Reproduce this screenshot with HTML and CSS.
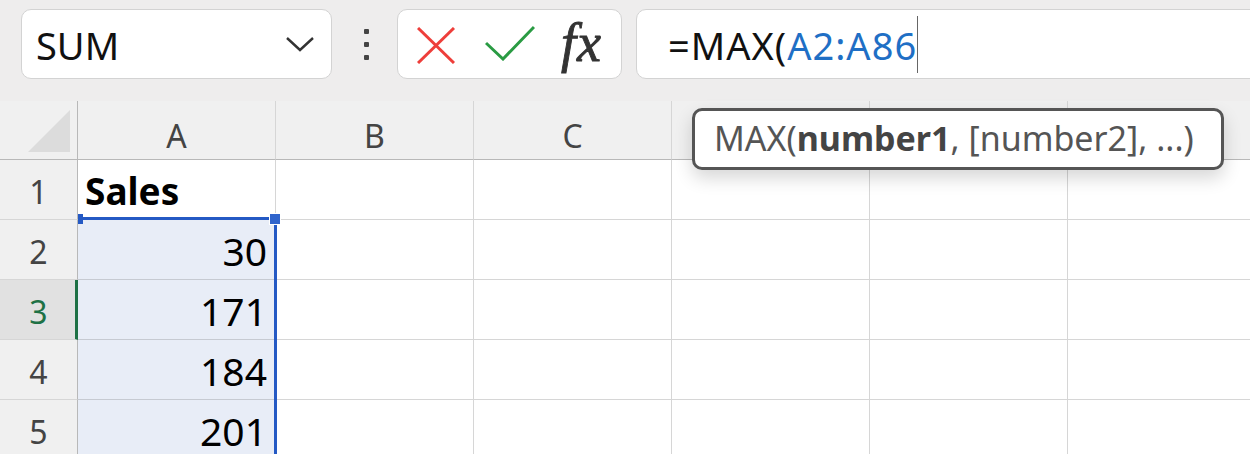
FILE: index.html
```html
<!DOCTYPE html>
<html lang="en">
<head>
<meta charset="utf-8">
<title>Excel MAX formula</title>
<link rel="stylesheet" href="styles.css">
</head>
<body>
<div class="app">
  <div class="toolbar">
    <div class="namebox">
      <span class="name-text">SUM</span>
      <svg class="chevron" width="30" height="16" viewBox="0 0 30 16"><polyline points="2,2 15,14 28,2" fill="none" stroke="#333" stroke-width="2.4"/></svg>
    </div>
    <div class="dots"><span></span><span></span><span></span></div>
    <div class="buttons">
      <svg class="icon-x" width="38" height="37" viewBox="0 0 38 37"><line x1="1" y1="1" x2="37" y2="36" stroke="#ee3e3a" stroke-width="3"/><line x1="37" y1="1" x2="1" y2="36" stroke="#ee3e3a" stroke-width="3"/></svg>
      <svg class="icon-check" width="50" height="36" viewBox="0 0 50 36"><polyline points="1,18 18,34 49,2" fill="none" stroke="#2a9b43" stroke-width="3"/></svg>
      <span class="fx">fx</span>
    </div>
    <div class="formula">
      <span class="f-dark">=MAX(</span><span class="f-blue">A2:A86</span><span class="caret"></span>
    </div>
  </div>
  <div class="sheet">
    <div class="corner"><span class="tri"></span></div>
    <div class="colhead">A</div>
    <div class="colhead">B</div>
    <div class="colhead">C</div>
    <div class="colhead">D</div>
    <div class="colhead">E</div>
    <div class="colhead last"></div>

    <div class="rowhead">1</div>
    <div class="cell bold">Sales</div>
    <div class="cell"></div><div class="cell"></div><div class="cell"></div><div class="cell"></div><div class="cell last"></div>

    <div class="rowhead">2</div>
    <div class="cell num sel">30</div>
    <div class="cell"></div><div class="cell"></div><div class="cell"></div><div class="cell"></div><div class="cell last"></div>

    <div class="rowhead active">3</div>
    <div class="cell num sel">171</div>
    <div class="cell"></div><div class="cell"></div><div class="cell"></div><div class="cell"></div><div class="cell last"></div>

    <div class="rowhead">4</div>
    <div class="cell num sel">184</div>
    <div class="cell"></div><div class="cell"></div><div class="cell"></div><div class="cell"></div><div class="cell last"></div>

    <div class="rowhead">5</div>
    <div class="cell num sel">201</div>
    <div class="cell"></div><div class="cell"></div><div class="cell"></div><div class="cell"></div><div class="cell last"></div>

    <div class="range"></div>
    <div class="handle-left"></div>
    <div class="handle-right"></div>

    <div class="tooltip">MAX(<b>number1</b>, [number2], ...)</div>
  </div>
</div>
</body>
</html>
```

FILE: styles.css
```css
html, body {
  margin: 0;
  padding: 0;
}
body {
  width: 1250px;
  height: 454px;
  overflow: hidden;
  background: #eeeded;
  font-family: "Noto Sans", "Open Sans", sans-serif;
}
.app {
  width: 1250px;
  height: 454px;
  overflow: hidden;
}
.toolbar {
  height: 101px;
  box-sizing: border-box;
  padding-top: 9px;
  display: flex;
  align-items: flex-start;
  background: #eeeded;
}
.toolbar > * {
  flex-shrink: 0;
}
.namebox {
  margin-left: 21px;
  width: 311px;
  height: 70px;
  box-sizing: border-box;
  background: #fff;
  border: 1px solid #d3d3d3;
  border-radius: 10px;
  display: flex;
  align-items: center;
  padding-left: 14px;
  padding-right: 16px;
}
.name-text {
  flex: 1;
  font-size: 38px;
  color: #111;
  line-height: 68px;
  padding-top: 2px;
}
.chevron {
  display: block;
}
.dots {
  margin-left: 32px;
  margin-top: 20px;
  display: flex;
  flex-direction: column;
  gap: 8px;
}
.dots span {
  width: 5px;
  height: 5px;
  background: #444;
  border-radius: 1px;
}
.buttons {
  margin-left: 28px;
  width: 225px;
  height: 70px;
  box-sizing: border-box;
  background: #fff;
  border: 1px solid #d3d3d3;
  border-radius: 10px;
  display: flex;
  align-items: center;
  padding-left: 19px;
}
.icon-x {
  display: block;
  margin-top: 2px;
}
.icon-check {
  display: block;
  margin-left: 30px;
  margin-top: -2px;
}
.fx {
  margin-left: 26px;
  font-family: "Liberation Serif", "DejaVu Serif", serif;
  font-style: italic;
  font-weight: 400;
  font-size: 54px;
  -webkit-text-stroke: 0.9px #333;
  color: #333;
  line-height: 1;
  margin-top: -2px;
  letter-spacing: 1px;
}
.formula {
  margin-left: 14px;
  width: 640px;
  height: 70px;
  box-sizing: border-box;
  background: #fff;
  border: 1px solid #d3d3d3;
  border-radius: 10px;
  display: flex;
  align-items: center;
  padding-left: 31px;
  font-size: 38px;
  line-height: 68px;
  letter-spacing: 1px;
}
.f-dark {
  color: #111;
  padding-top: 2px;
}
.f-blue {
  color: #1f6fc5;
  padding-top: 2px;
}
.caret {
  width: 1px;
  height: 57px;
  background: #666;
  margin-left: 0;
}
.sheet {
  position: relative;
  display: grid;
  grid-template-columns: 78px 198px 198px 198px 198px 198px 200px;
  grid-template-rows: 59px repeat(5, 60px);
  background: #fff;
}
.corner {
  background: #f0f0f0;
  border-right: 1px solid #b8b8b8;
  border-bottom: 1px solid #b8b8b8;
  position: relative;
}
.tri {
  position: absolute;
  left: 28px;
  top: 9px;
  width: 0;
  height: 0;
  border-left: 42px solid transparent;
  border-bottom: 42px solid #dcdcdc;
}
.colhead {
  background: #f0f0f0;
  border-right: 1px solid #d6d6d6;
  border-bottom: 1px solid #b8b8b8;
  text-align: center;
  font-size: 32px;
  color: #444;
  line-height: 58px;
  padding-top: 6px;
  box-sizing: border-box;
}
.rowhead {
  background: #f0f0f0;
  border-right: 1px solid #b8b8b8;
  border-bottom: 1px solid #d6d6d6;
  text-align: center;
  font-size: 32px;
  color: #444;
  line-height: 56px;
  padding-top: 4px;
  box-sizing: border-box;
}
.rowhead.active {
  background: #e1e1e1;
  color: #1e7145;
  border-right: 3px solid #1e7145;
  padding-left: 2px;
}
.cell {
  border-right: 1px solid #d6d6d6;
  border-bottom: 1px solid #d6d6d6;
  box-sizing: border-box;
  font-size: 39px;
  color: #000;
  line-height: 56px;
  padding-top: 3px;
  padding-left: 7px;
  padding-right: 8px;
}
.cell.bold {
  font-weight: 700;
  font-size: 37px;
}
.cell.num {
  text-align: right;
}
.cell.sel {
  background: #e8edf7;
  border-bottom-color: #c6cad2;
}
.range {
  position: absolute;
  left: 79px;
  top: 116px;
  width: 198px;
  height: 260px;
  box-sizing: border-box;
  border-top: 3px solid #2459c4;
  border-right: 3px solid #2459c4;
}
.handle-left {
  position: absolute;
  left: 78px;
  top: 113px;
  width: 5px;
  height: 10px;
  background: #2459c4;
}
.handle-right {
  position: absolute;
  left: 269px;
  top: 112px;
  width: 10px;
  height: 10px;
  background: #2f64cc;
  border: 1px solid #fff;
}
.tooltip {
  position: absolute;
  left: 692px;
  top: 7px;
  width: 532px;
  height: 62px;
  box-sizing: border-box;
  background: #fff;
  border: 3px solid #555;
  border-radius: 10px;
  box-shadow: 0 8px 18px rgba(0, 0, 0, 0.16);
  padding-left: 19px;
  font-size: 34px;
  line-height: 54px;
  color: #555;
  white-space: nowrap;
}
.tooltip b {
  color: #444;
}
```
